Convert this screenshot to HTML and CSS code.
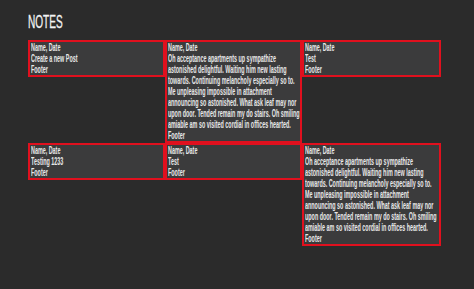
FILE: index.html
```html
<!DOCTYPE html>
<html>
<head>
<meta charset="utf-8">
<link rel="stylesheet" href="styles.css">
</head>
<body>
<div class="page">
  <h1 class="title"><span class="title-text">NOTES</span></h1>
  <div class="grid">
    <div class="card">
      <div class="content">
        <div class="line">Name, Date</div>
        <div class="line">Create a new Post</div>
        <div class="line">Footer</div>
      </div>
    </div>
    <div class="card">
      <div class="content">
        <div class="line">Name, Date</div>
        <div class="body">Oh acceptance apartments up sympathize<br>astonished delightful. Waiting him new lasting<br>towards. Continuing melancholy especially so to.<br>Me unpleasing impossible in attachment<br>announcing so astonished. What ask leaf may nor<br>upon door. Tended remain my do stairs. Oh smiling<br>amiable am so visited cordial in offices hearted.</div>
        <div class="line">Footer</div>
      </div>
    </div>
    <div class="card">
      <div class="content">
        <div class="line">Name, Date</div>
        <div class="line">Test</div>
        <div class="line">Footer</div>
      </div>
    </div>
    <div class="card">
      <div class="content">
        <div class="line">Name, Date</div>
        <div class="line">Testing 1233</div>
        <div class="line">Footer</div>
      </div>
    </div>
    <div class="card">
      <div class="content">
        <div class="line">Name, Date</div>
        <div class="line">Test</div>
        <div class="line">Footer</div>
      </div>
    </div>
    <div class="card">
      <div class="content">
        <div class="line">Name, Date</div>
        <div class="body">Oh acceptance apartments up sympathize<br>astonished delightful. Waiting him new lasting<br>towards. Continuing melancholy especially so to.<br>Me unpleasing impossible in attachment<br>announcing so astonished. What ask leaf may nor<br>upon door. Tended remain my do stairs. Oh smiling<br>amiable am so visited cordial in offices hearted.</div>
        <div class="line">Footer</div>
      </div>
    </div>
  </div>
</div>
</body>
</html>
```
FILE: styles.css
```css
html, body {
  margin: 0;
  padding: 0;
  background: #2b2b2b;
}
body {
  width: 474px;
  height: 289px;
  overflow: hidden;
  font-family: "Liberation Sans", Arial, sans-serif;
  color: #ececec;
}
.page {
  padding: 13px 33px 0 28px;
}
.title {
  margin: 0 0 9px 0;
  font-size: 18px;
  line-height: 18px;
  font-weight: normal;
  color: #f4f4f4;
}
.title-text {
  display: inline-block;
  transform: scaleX(0.56);
  transform-origin: 0 0;
  -webkit-text-stroke: 0.3px #f4f4f4;
}
.grid {
  display: grid;
  grid-template-columns: 137px 137px 139px;
  align-items: start;
}
.card {
  background: #3b3b3c;
  border: 2px solid #e0101e;
  padding: 0 1px;
  overflow: hidden;
}
.content {
  width: 200%;
  font-size: 10px;
  line-height: 11px;
  font-weight: bold;
  transform: scaleX(0.54);
  transform-origin: 0 0;
  color: #e8e8e8;
}
.line, .body {
  white-space: nowrap;
}
```
